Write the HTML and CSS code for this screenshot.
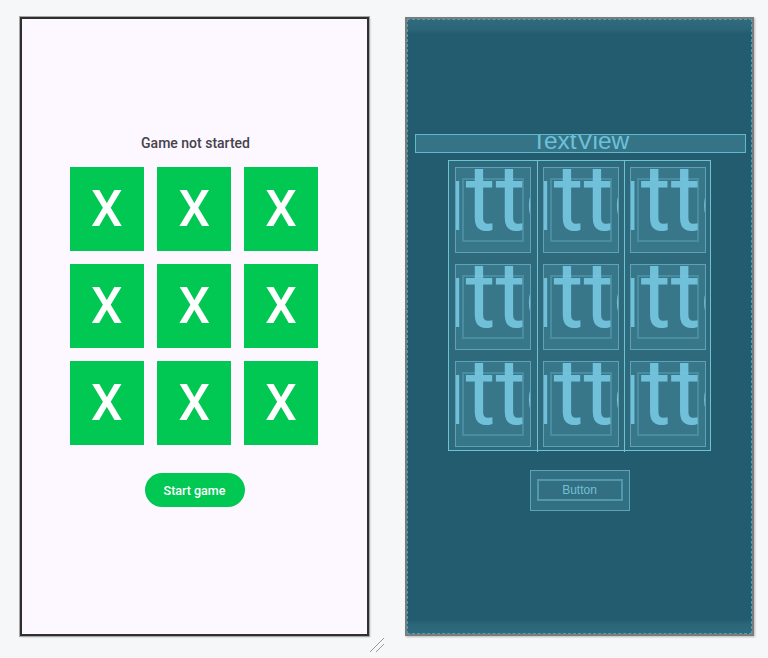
FILE: index.html
```html
<!DOCTYPE html>
<html>
<head>
<meta charset="utf-8">
<link rel="stylesheet" href="styles.css">
</head>
<body>
<div class="stage">
  <div class="device design">
    <div class="screen">
      <div class="title">Game not started</div>
      <div class="board">
        <div class="col">
          <div class="cell"><div class="tile">X</div></div>
          <div class="cell"><div class="tile">X</div></div>
          <div class="cell"><div class="tile">X</div></div>
        </div>
        <div class="col">
          <div class="cell"><div class="tile">X</div></div>
          <div class="cell"><div class="tile">X</div></div>
          <div class="cell"><div class="tile">X</div></div>
        </div>
        <div class="col">
          <div class="cell"><div class="tile">X</div></div>
          <div class="cell"><div class="tile">X</div></div>
          <div class="cell"><div class="tile">X</div></div>
        </div>
      </div>
      <div class="btn"><div class="pill">Start game</div></div>
    </div>
  </div>

  <div class="device blueprint">
    <div class="screen">
      <div class="title">TextView</div>
      <div class="board">
        <div class="col">
          <div class="cell"><div class="tile"><span class="bounds"></span><span class="big">Button</span></div></div>
          <div class="cell"><div class="tile"><span class="bounds"></span><span class="big">Button</span></div></div>
          <div class="cell"><div class="tile"><span class="bounds"></span><span class="big">Button</span></div></div>
        </div>
        <div class="col">
          <div class="cell"><div class="tile"><span class="bounds"></span><span class="big">Button</span></div></div>
          <div class="cell"><div class="tile"><span class="bounds"></span><span class="big">Button</span></div></div>
          <div class="cell"><div class="tile"><span class="bounds"></span><span class="big">Button</span></div></div>
        </div>
        <div class="col">
          <div class="cell"><div class="tile"><span class="bounds"></span><span class="big">Button</span></div></div>
          <div class="cell"><div class="tile"><span class="bounds"></span><span class="big">Button</span></div></div>
          <div class="cell"><div class="tile"><span class="bounds"></span><span class="big">Button</span></div></div>
        </div>
      </div>
      <div class="btn"><div class="pill">Button</div></div>
    </div>
  </div>
</div>
<svg class="resize" width="18" height="18" viewBox="0 0 18 18">
  <line x1="1" y1="16" x2="15" y2="2" stroke="#9a9a9a" stroke-width="1"/>
  <line x1="7" y1="16" x2="15" y2="8" stroke="#9a9a9a" stroke-width="1"/>
</svg>
</body>
</html>
```

FILE: styles.css
```css
html, body {
  margin: 0;
  padding: 0;
}
body {
  width: 768px;
  height: 658px;
  overflow: hidden;
  background: #f6f7f9;
  font-family: Roboto, "Liberation Sans", sans-serif;
  position: relative;
}
.stage {
  display: flex;
  gap: 36px;
  padding: 17px 0 0 20px;
}
.device {
  width: 349px;
  height: 619px;
  box-sizing: border-box;
  overflow: hidden;
}
.screen {
  display: flex;
  flex-direction: column;
  align-items: center;
  padding-top: 115px;
}
.title {
  align-self: stretch;
  margin: 0 6px 0 8px;
  height: 19px;
  box-sizing: border-box;
  text-align: center;
  white-space: nowrap;
  overflow: hidden;
}
.board {
  margin-top: 7px;
  width: 263px;
  height: 291px;
  box-sizing: border-box;
  display: grid;
  grid-template-columns: 87.5px 87.5px 88px;
}
.col {
  display: flex;
  flex-direction: column;
}
.cell {
  height: 97px;
  box-sizing: border-box;
  padding-top: 7px;
  display: flex;
  justify-content: center;
  align-items: flex-start;
}
.col:last-child .cell {
  justify-content: flex-start;
  padding-left: 6px;
}
.tile {
  width: 74px;
  height: 84px;
  box-sizing: border-box;
  display: flex;
  align-items: center;
  justify-content: center;
}
.btn {
  margin-top: 19px;
  width: 100px;
  height: 41px;
  box-sizing: border-box;
  padding: 3px 0 4px;
}
.pill {
  height: 100%;
  box-sizing: border-box;
  display: flex;
  align-items: center;
  justify-content: center;
}

/* ---------- design view ---------- */
.design {
  background: #fdf7ff;
  border: 2px solid #2f2f2f;
  box-shadow: 0 0 0 1px #a6a6a6, 1px 1px 2px rgba(0, 0, 0, 0.25);
}
.design .title {
  font-size: 14px;
  font-weight: 500;
  line-height: 19px;
  color: #45424a;
}
.design .tile {
  background: #00c853;
  color: #ffffff;
  font-size: 50px;
  font-weight: 500;
  line-height: 1;
}
.design .pill {
  background: #00c853;
  border-radius: 17px;
  color: #ffffff;
  font-size: 12.5px;
  font-weight: 500;
}

/* ---------- blueprint view ---------- */
.blueprint {
  border: 2px solid #7c7c7c;
  outline: 1px dashed #4f9fb4;
  outline-offset: -3px;
  background: linear-gradient(to bottom,
    #2f6b7d 0px, #2c6779 9px, #255e70 14px,
    #235c6e 15px, #235c6e calc(100% - 14px),
    #2b6678 calc(100% - 10px), #2f6b7d 100%);
  box-shadow: 1px 1px 2px rgba(0, 0, 0, 0.25);
}
.blueprint .title {
  border: 1px solid #5fb8cd;
  background: rgba(120, 200, 225, 0.22);
  color: #6cc1d8;
  font-family: "Liberation Sans", Arial, sans-serif;
  font-size: 24.5px;
  line-height: 12px;
}
.blueprint .board {
  border: 1px solid #6cc2d6;
  background: rgba(120, 200, 225, 0.13);
}
.blueprint .col + .col {
  border-left: 1px solid #6cc2d6;
}
.blueprint .cell {
  padding-top: 6px;
}
.blueprint .col:last-child .cell {
  padding-left: 5px;
}
.blueprint .tile {
  position: relative;
  overflow: hidden;
  border: 1px solid rgba(120, 200, 225, 0.55);
  background: rgba(120, 200, 225, 0.14);
  width: 76px;
  height: 86px;
}
.blueprint .bounds {
  width: 62px;
  height: 64px;
  box-sizing: border-box;
  border: 2px solid rgba(120, 200, 225, 0.28);
}
.blueprint .big {
  position: absolute;
  left: 0;
  right: 0;
  top: 0;
  display: flex;
  justify-content: center;
  white-space: nowrap;
  font-family: Roboto, sans-serif;
  font-size: 92px;
  line-height: 62px;
  color: rgba(120, 200, 225, 0.9);
}
.blueprint .btn {
  border: 1px solid rgba(120, 200, 225, 0.6);
  background: rgba(120, 200, 225, 0.18);
  padding: 8px 6px 9px 6px;
}
.blueprint .pill {
  border: 2px solid rgba(120, 200, 225, 0.45);
  color: #74bfd3;
  font-family: "Liberation Sans", Arial, sans-serif;
  font-size: 12px;
}

.resize {
  position: absolute;
  left: 369px;
  top: 636px;
}
```
